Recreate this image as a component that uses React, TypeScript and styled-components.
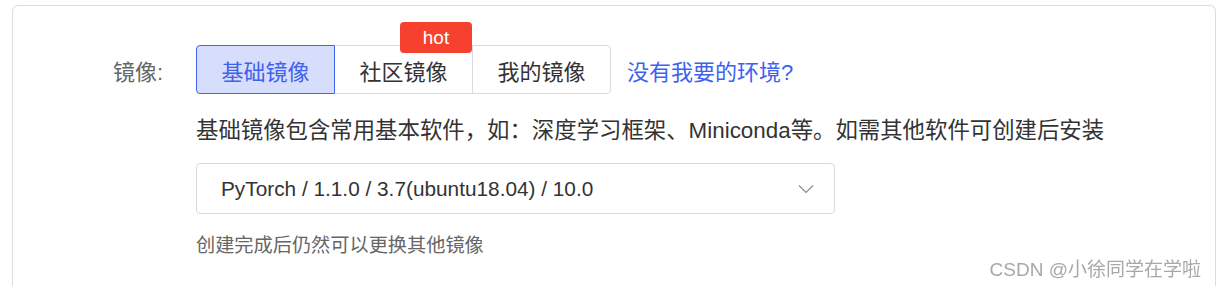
import { useState } from "react";
import styled, { createGlobalStyle } from "styled-components";

const GlobalStyle = createGlobalStyle`
  html, body {
    margin: 0;
    padding: 0;
    background: #ffffff;
    font-family: "Liberation Sans", "Noto Sans CJK SC", sans-serif;
  }
`;

const tabs = ["基础镜像", "社区镜像", "我的镜像"];

export default function App() {
  const [active, setActive] = useState(0);

  return (
    <>
      <GlobalStyle />
      <Card>
        <FormRow>
          <Label>镜像:</Label>
          <Field>
            <TabGroup>
              {tabs.map((tab, i) => (
                <Tab key={tab} selected={i === active} onClick={() => setActive(i)}>
                  {tab}
                  {i === 1 && <HotBadge>hot</HotBadge>}
                </Tab>
              ))}
            </TabGroup>
            <HelpLink href="#">没有我要的环境?</HelpLink>
          </Field>
        </FormRow>
        <Indented>
          <Description>
            基础镜像包含常用基本软件，如：深度学习框架、Miniconda等。如需其他软件可创建后安装
          </Description>
          <Select>
            <SelectValue>PyTorch / 1.1.0 / 3.7(ubuntu18.04) / 10.0</SelectValue>
            <svg width="16" height="10" viewBox="0 0 16 10" fill="none">
              <path d="M1 1.5 L8 8.5 L15 1.5" stroke="#8a8d96" strokeWidth="1.2" />
            </svg>
          </Select>
          <Hint>创建完成后仍然可以更换其他镜像</Hint>
        </Indented>
      </Card>
      <Watermark>CSDN @小徐同学在学啦</Watermark>
    </>
  );
}

const Card = styled.div`
  box-sizing: border-box;
  margin: 5px 0 0 12px;
  width: 1204px;
  height: 281px;
  border: 1px solid #dcdde3;
  border-bottom: none;
  border-radius: 6px 6px 0 0;
  padding-top: 39px;
`;

const FormRow = styled.div`
  display: grid;
  grid-template-columns: 183px 1fr;
  align-items: center;
`;

const Label = styled.div`
  text-align: right;
  padding-right: 33px;
  font-size: 22px;
  color: #666666;
`;

const Field = styled.div`
  display: flex;
  align-items: center;
`;

const TabGroup = styled.div`
  display: flex;
`;

const Tab = styled.div<{ selected?: boolean }>`
  position: relative;
  box-sizing: border-box;
  width: 139px;
  height: 49px;
  margin-left: -1px;
  display: flex;
  align-items: center;
  justify-content: center;
  font-size: 22px;
  cursor: pointer;
  color: ${({ selected }) => (selected ? "#3f62ee" : "#333333")};
  background: ${({ selected }) => (selected ? "#d7defb" : "#ffffff")};
  border: 1px solid ${({ selected }) => (selected ? "#3f66ef" : "#d9dae0")};
  z-index: ${({ selected }) => (selected ? 1 : 0)};

  &:first-child {
    margin-left: 0;
    border-radius: 4px 0 0 4px;
  }
  &:last-child {
    border-radius: 0 4px 4px 0;
  }
`;

const HotBadge = styled.span`
  position: absolute;
  top: -24px;
  right: 0;
  width: 72px;
  height: 31px;
  display: flex;
  align-items: center;
  justify-content: center;
  background: #f5412e;
  color: #ffffff;
  border-radius: 4px;
  font-size: 19px;
  z-index: 2;
`;

const HelpLink = styled.a`
  margin-left: 16px;
  font-size: 22px;
  color: #3d62f2;
  text-decoration: none;
`;

const Indented = styled.div`
  padding-left: 183px;
  display: flex;
  flex-direction: column;
  align-items: flex-start;
`;

const Description = styled.div`
  margin-top: 22px;
  line-height: 30px;
  font-size: 22.4px;
  color: #333333;
  white-space: nowrap;
`;

const Select = styled.div`
  box-sizing: border-box;
  margin-top: 17px;
  width: 639px;
  height: 51px;
  border: 1px solid #d9dae0;
  border-radius: 4px;
  padding: 0 20px 0 24px;
  display: flex;
  align-items: center;
  justify-content: space-between;
`;

const SelectValue = styled.span`
  font-size: 20.8px;
  color: #333333;
`;

const Hint = styled.div`
  margin-top: 19px;
  line-height: 26px;
  font-size: 19.2px;
  color: #666666;
`;

const Watermark = styled.div`
  position: fixed;
  right: 15px;
  top: 254px;
  font-size: 19px;
  color: #a8a8a8;
  white-space: nowrap;
`;
